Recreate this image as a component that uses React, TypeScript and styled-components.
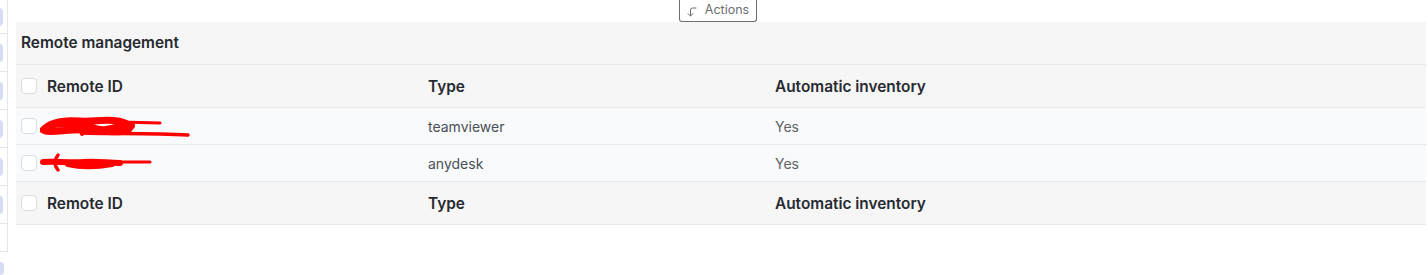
import React from 'react'
import styled, { createGlobalStyle } from 'styled-components'
import { CornerLeftDown } from 'lucide-react'

const GlobalStyle = createGlobalStyle`
  html, body {
    margin: 0;
    padding: 0;
    background: #ffffff;
  }

  body {
    font-family: Inter, 'Noto Sans', sans-serif;
    font-size: 15.4px;
    color: #1d273b;
  }
`

const StyledPage = styled.div`
  display: flex;
  width: 1428px;
  height: 275px;
  overflow: hidden;
`

const StyledRail = styled.div`
  width: 8px;
  flex-shrink: 0;
  display: flex;
  flex-direction: column;
`

const StyledRailItem = styled.div<{ filled: boolean; height: number }>`
  height: ${({ height }): number => height}px;
  width: 7px;
  border-right: 1px solid #e3e6ec;
  border-bottom: 1px solid #e3e6ec;
  display: flex;
  align-items: center;
  flex-shrink: 0;

  &::before {
    content: '';
    display: ${({ filled }): string => (filled ? 'block' : 'none')};
    width: 4px;
    height: 18px;
    margin-left: -1px;
    border-radius: 0 4px 4px 0;
    background: #d6dcf2;
  }
`

const StyledRailTail = styled.div`
  margin-top: 10px;
  width: 4px;
  height: 18px;
  border-radius: 0 4px 4px 0;
  background: #d6dcf2;
`

const StyledMain = styled.div`
  flex: 1;
  display: flex;
  flex-direction: column;
  align-items: center;
`

const StyledActions = styled.button`
  height: 22px;
  padding: 0 7px 1px 6px;
  display: flex;
  align-items: center;
  gap: 7px;
  background: #ffffff;
  border: 1px solid #6b6e73;
  border-top: 0;
  border-radius: 0 0 3px 3px;
  color: #6b6e73;
  font-family: Inter, sans-serif;
  font-size: 12.5px;
  line-height: 1;
  cursor: pointer;

  svg {
    margin-top: 4px;
  }
`

const StyledCard = styled.div`
  align-self: stretch;
  margin: 0 2px 0 8px;
`

const StyledTable = styled.table`
  width: 100%;
  border-collapse: collapse;
  table-layout: fixed;
`

const StyledTitle = styled.th`
  height: 41px;
  padding: 0 5px 1px;
  text-align: left;
  font-weight: 600;
  color: #262a31;
  background: #f6f6f6;
  border-bottom: 1px solid #e8e9eb;
`

const StyledRow = styled.tr<{ head?: boolean }>`
  height: ${({ head }): string => (head ? '43px' : '37px')};
  background: ${({ head }): string => (head ? '#f6f6f6' : '#f9fafb')};
  border-bottom: 1px solid #e8e9eb;
`

const StyledHeadCell = styled.th`
  padding: 0 8px;
  text-align: left;
  font-weight: 600;
  color: #262a31;
`

const StyledCell = styled.td<{ muted?: boolean }>`
  padding: 0 8px;
  font-size: 14px;
  color: ${({ muted }): string => (muted ? '#5f6368' : '#4a4f57')};
  font-weight: 400;
`

const StyledCheckCell = styled.td`
  padding: 0 0 0 5px;
  vertical-align: middle;
`

const StyledCheckbox = styled.span`
  display: block;
  width: 14px;
  height: 14px;
  border: 1px solid #dadce0;
  border-radius: 4px;
  background: #ffffff;
`

const StyledScribble = styled.svg`
  display: block;
  margin-left: -7px;
`

const railItems = [33, 37, 37, 37, 37, 37, 27]

const ScribbleOne: React.FC = () => (
  <StyledScribble width="160" height="26" viewBox="0 0 160 26">
    <g fill="none" stroke="#ff0000" strokeLinecap="round" strokeLinejoin="round">
      <path d="M3 17 C 12 7, 28 7, 40 8 C 52 9, 64 6, 78 8 C 88 10, 94 15, 86 18 C 78 20, 62 18, 46 17 C 30 16, 12 20, 5 18" strokeWidth="7" />
      <path d="M10 13 C 24 9, 36 14, 44 12 C 50 11, 56 18, 66 16 C 76 14, 84 11, 92 13" strokeWidth="6" />
      <path d="M42 8 C 42 14, 40 18, 42 21" strokeWidth="4" />
      <path d="M80 9 L 120 10" strokeWidth="3" />
      <path d="M42 20 C 70 21, 110 20, 148 22" strokeWidth="3.5" />
    </g>
  </StyledScribble>
)

const ScribbleTwo: React.FC = () => (
  <StyledScribble width="120" height="20" viewBox="0 0 120 20">
    <g fill="none" stroke="#ff0000" strokeLinecap="round" strokeLinejoin="round">
      <path d="M3 9 C 14 8, 30 10, 44 9 C 56 8, 68 10, 80 10" strokeWidth="6" />
      <path d="M18 2 C 14 7, 14 12, 18 17" strokeWidth="3.5" />
      <path d="M28 11 C 40 14, 56 14, 72 11" strokeWidth="6" />
      <path d="M60 9 L 110 9" strokeWidth="3" />
    </g>
  </StyledScribble>
)

interface RemoteRow {
  scribble: React.ReactNode
  type: string
  auto: string
}

const rows: RemoteRow[] = [
  { scribble: <ScribbleOne />, type: 'teamviewer', auto: 'Yes' },
  { scribble: <ScribbleTwo />, type: 'anydesk', auto: 'Yes' },
]

const HeadRow: React.FC = () => (
  <StyledRow head>
    <StyledCheckCell>
      <StyledCheckbox />
    </StyledCheckCell>
    <StyledHeadCell>Remote ID</StyledHeadCell>
    <StyledHeadCell>Type</StyledHeadCell>
    <StyledHeadCell>Automatic inventory</StyledHeadCell>
  </StyledRow>
)

const App: React.FC = () => (
  <>
    <GlobalStyle />
    <StyledPage>
      <StyledRail>
        {railItems.map((h, i) => (
          <StyledRailItem key={i} height={h} filled={i < 6} />
        ))}
        <StyledRailTail />
      </StyledRail>
      <StyledMain>
        <StyledActions>
          <CornerLeftDown size={12} strokeWidth={2} />
          Actions
        </StyledActions>
        <StyledCard>
          <StyledTable>
            <colgroup>
              <col style={{ width: 23 }} />
              <col style={{ width: 381 }} />
              <col style={{ width: 347 }} />
              <col />
            </colgroup>
            <thead>
              <tr>
                <StyledTitle colSpan={4}>Remote management</StyledTitle>
              </tr>
              <HeadRow />
            </thead>
            <tbody>
              {rows.map((row) => (
                <StyledRow key={row.type}>
                  <StyledCheckCell>
                    <StyledCheckbox />
                  </StyledCheckCell>
                  <StyledCell>{row.scribble}</StyledCell>
                  <StyledCell>{row.type}</StyledCell>
                  <StyledCell muted>{row.auto}</StyledCell>
                </StyledRow>
              ))}
            </tbody>
            <tfoot>
              <HeadRow />
            </tfoot>
          </StyledTable>
        </StyledCard>
      </StyledMain>
    </StyledPage>
  </>
)

export default App
